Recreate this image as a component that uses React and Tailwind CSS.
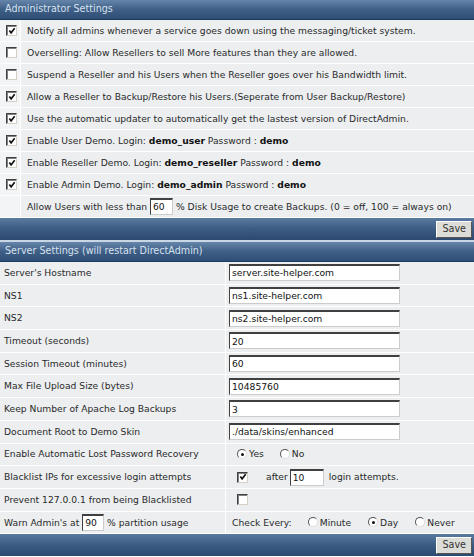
import React from 'react';

const font = { fontFamily: '"DejaVu Sans", Verdana, sans-serif' };

const Check = ({ on }) => (
  <span className="inline-flex w-[11px] h-[11px] items-center justify-center bg-white border border-t-[#404040] border-l-[#404040] border-b-[#d4d0c8] border-r-[#d4d0c8] shadow-[inset_1px_1px_0_#808080]">
    {on && (
      <svg viewBox="0 0 9 9" className="w-[8px] h-[8px]">
        <path d="M1.5 4 L3.5 6.5 L7.5 1.5" fill="none" stroke="#111" strokeWidth="1.9" />
      </svg>
    )}
  </span>
);

const Radio = ({ on }) => (
  <span className="inline-flex w-[10px] h-[10px] rounded-full items-center justify-center bg-white border border-t-[#555] border-l-[#555] border-b-[#ddd] border-r-[#ddd]">
    {on && <span className="w-[3px] h-[3px] rounded-full bg-[#111]" />}
  </span>
);

const Field = ({ value, w = 'w-[171px]' }) => (
  <span className={`inline-flex items-center h-[17px] ${w} bg-white border border-t-[#404040] border-l-[#404040] border-b-[#ccc] border-r-[#ccc] border-t-2 px-[2px] text-[9.2px] text-[#111]`}>
    {value}
  </span>
);

const Header = ({ children }) => (
  <div className="h-[20px] flex items-center px-[5px] text-[9.6px] text-[#d6e2ef] bg-gradient-to-b from-[#6585aa] via-[#3f5f86] to-[#2f4e76] border-b border-[#1f3a5c]">
    {children}
  </div>
);

const SaveBar = () => (
  <div className="h-[22px] flex items-center justify-end pr-[2px] bg-gradient-to-b from-[#5a7aa0] via-[#3c5c84] to-[#2c4a70]">
    <span className="h-[17px] px-[5px] flex items-center text-[9.6px] text-[#333] bg-[#dcdcd8] border border-t-[#fff] border-l-[#fff] border-b-[#555] border-r-[#555]">
      Save
    </span>
  </div>
);

const B = ({ children }) => <b className="text-[#111]">{children}</b>;

const adminRows = [
  [true, <span>Notify all admins whenever a service goes down using the messaging/ticket system.</span>],
  [false, <span>Overselling: Allow Resellers to sell More features than they are allowed.</span>],
  [false, <span>Suspend a Reseller and his Users when the Reseller goes over his Bandwidth limit.</span>],
  [true, <span>Allow a Reseller to Backup/Restore his Users.(Seperate from User Backup/Restore)</span>],
  [true, <span>Use the automatic updater to automatically get the lastest version of DirectAdmin.</span>],
  [true, <span>Enable User Demo. Login: <B>demo_user</B> Password : <B>demo</B></span>],
  [true, <span>Enable Reseller Demo. Login: <B>demo_reseller</B> Password : <B>demo</B></span>],
  [true, <span>Enable Admin Demo. Login: <B>demo_admin</B> Password : <B>demo</B></span>],
];

const serverRows = [
  ["Server's Hostname", <Field value="server.site-helper.com" />],
  ['NS1', <Field value="ns1.site-helper.com" />],
  ['NS2', <Field value="ns2.site-helper.com" />],
  ['Timeout (seconds)', <Field value="20" />],
  ['Session Timeout (minutes)', <Field value="60" />],
  ['Max File Upload Size (bytes)', <Field value="10485760" />],
  ['Keep Number of Apache Log Backups', <Field value="3" />],
  ['Document Root to Demo Skin', <Field value="./data/skins/enhanced" />],
  [
    'Enable Automatic Lost Password Recovery',
    <span className="flex items-center gap-[2px] ml-[8px]">
      <Radio on /> <span className="mr-[14px]">Yes</span> <Radio /> <span>No</span>
    </span>,
  ],
  [
    'Blacklist IPs for excessive login attempts',
    <span className="flex items-center ml-[8px]">
      <Check on />
      <span className="ml-[18px] mr-[2px]">after</span>
      <Field value="10" w="w-[34px]" />
      <span className="ml-[5px]">login attempts.</span>
    </span>,
  ],
  ['Prevent 127.0.0.1 from being Blacklisted', <span className="flex ml-[8px]"><Check /></span>],
];

export default function App() {
  return (
    <div className="w-[474px] h-[557px] bg-white text-[9.2px] text-[#2a2a2a] overflow-hidden" style={font}>
      <Header>Administrator Settings</Header>
      {adminRows.map(([on, text], i) => (
        <div key={i} className="h-[22px] flex border-b border-white">
          <div className="w-[21px] shrink-0 flex items-center justify-center bg-[#f2f4f6] border-r border-white pl-[3px]">
            <Check on={on} />
          </div>
          <div className="flex-1 flex items-center pl-[6px] bg-[#eceef0] whitespace-nowrap">{text}</div>
        </div>
      ))}
      <div className="h-[22px] flex border-b border-white">
        <div className="w-[21px] shrink-0 bg-[#f2f4f6] border-r border-white" />
        <div className="flex-1 flex items-center pl-[6px] bg-[#eceef0] whitespace-nowrap">
          Allow Users with less than&nbsp;<Field value="60" w="w-[23px]" />&nbsp;% Disk Usage to create Backups. (0 = off, 100 = always on)
        </div>
      </div>
      <SaveBar />
      <div className="h-[2px] bg-[#c9d6e4]" />
      <Header>Server Settings (will restart DirectAdmin)</Header>
      {serverRows.map(([label, ctl], i) => (
        <div key={i} className="h-[22.7px] flex border-b border-white">
          <div className="w-[226px] shrink-0 flex items-center pl-[4px] bg-[#eceef0] border-r border-white whitespace-nowrap">{label}</div>
          <div className="flex-1 flex items-center pl-[3px] bg-[#eceef0]">{ctl}</div>
        </div>
      ))}
      <div className="h-[22.7px] flex border-b border-white">
        <div className="w-[226px] shrink-0 flex items-center pl-[4px] bg-[#eceef0] border-r border-white whitespace-nowrap">
          Warn Admin's at&nbsp;<Field value="90" w="w-[22px]" />&nbsp;% partition usage
        </div>
        <div className="flex-1 flex items-center pl-[6px] bg-[#eceef0] gap-[2px]">
          <span className="mr-[14px]">Check Every:</span>
          <Radio /> <span className="mr-[15px]">Minute</span>
          <Radio on /> <span className="mr-[15px]">Day</span>
          <Radio /> <span>Never</span>
        </div>
      </div>
      <SaveBar />
    </div>
  );
}
